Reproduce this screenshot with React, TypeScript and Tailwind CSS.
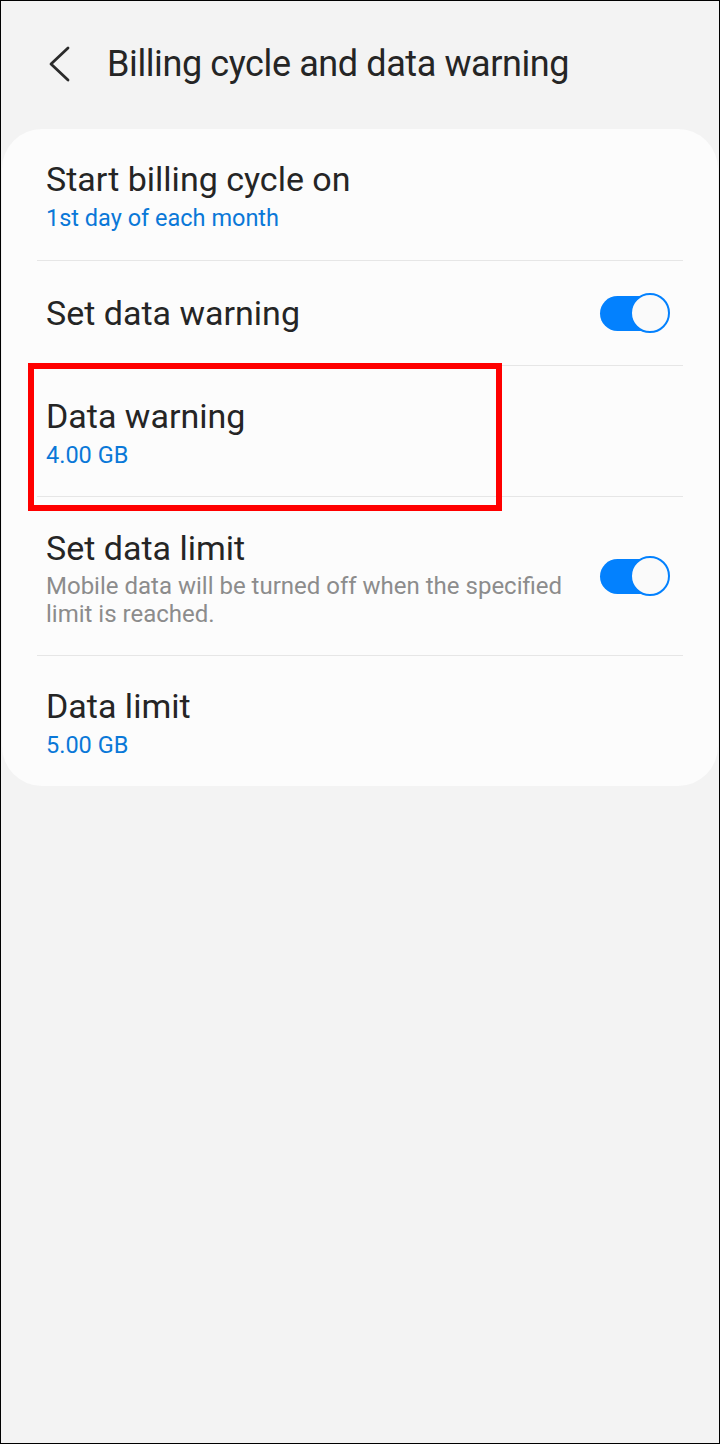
import React from "react";

const font = { fontFamily: "Roboto, 'Noto Sans', sans-serif" };

function Toggle() {
  return (
    <div className="relative w-[70px] h-[40px] flex items-center shrink-0">
      <div className="w-[60px] h-[35px] rounded-full bg-[#0381fe]" />
      <div className="absolute right-0 top-0 w-[40px] h-[40px] rounded-full bg-[#fafafa] border-[2px] border-[#0381fe]" />
    </div>
  );
}

function Divider() {
  return <div className="mx-[35px] h-px bg-[#e6e6e6]" />;
}

function ValueRow({ title, value, h }: { title: string; value: string; h: string }) {
  return (
    <div className={`${h} flex flex-col px-[44px] pt-[30px]`}>
      <div className="text-[34px] leading-[40px] text-[#252525]">{title}</div>
      <div className="text-[23.5px] leading-[30px] text-[#0a78d8] mt-[4px]">{value}</div>
    </div>
  );
}

export default function App() {
  return (
    <div
      className="w-[720px] h-[1444px] bg-[#f3f3f3] border border-black overflow-hidden relative"
      style={font}
    >
      {/* Header */}
      <div className="h-[128px] flex items-center pb-[3px]">
        <svg width="24" height="36" viewBox="0 0 24 36" className="ml-[46px] mr-[36px]">
          <path d="M21 2 L4 18 L21 34" fill="none" stroke="#2a2a2a" strokeWidth="2.8" strokeLinecap="round" strokeLinejoin="round" />
        </svg>
        <h1 className="text-[36px] leading-[44px] tracking-[-0.4px] text-[#252525]">
          Billing cycle and data warning
        </h1>
      </div>

      {/* Card */}
      <div className="mx-[1px] bg-[#fcfcfc] rounded-[40px]">
        <ValueRow title="Start billing cycle on" value="1st day of each month" h="h-[131px]" />
        <Divider />
        <div className="h-[104px] flex items-center justify-between pl-[44px] pr-[48px]">
          <div className="text-[34px] leading-[40px] text-[#252525]">Set data warning</div>
          <Toggle />
        </div>
        <Divider />
        <ValueRow title="Data warning" value="4.00 GB" h="h-[130px]" />
        <Divider />
        <div className="h-[158px] flex items-center justify-between pl-[44px] pr-[48px]">
          <div className="w-[530px] pt-[4px]">
            <div className="text-[34px] leading-[40px] text-[#252525]">Set data limit</div>
            <div className="text-[24px] leading-[28px] text-[#8c8c8c] mt-[4px]">
              Mobile data will be turned off when the specified limit is reached.
            </div>
          </div>
          <Toggle />
        </div>
        <Divider />
        <ValueRow title="Data limit" value="5.00 GB" h="h-[130px]" />
      </div>

      {/* Highlight box */}
      <div className="absolute left-[27px] top-[362px] w-[474px] h-[148px] border-[6px] border-[#ff0000]" />
    </div>
  );
}
